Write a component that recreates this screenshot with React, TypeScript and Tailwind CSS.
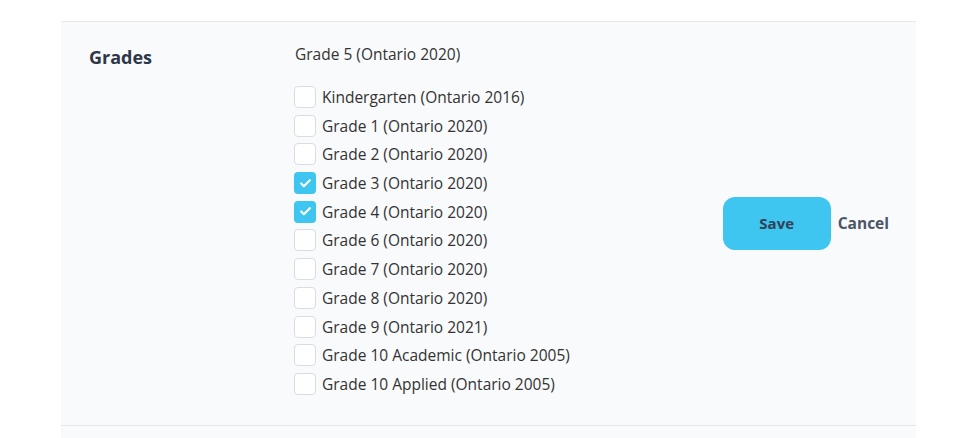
import { Check } from "lucide-react";
import { useState } from "react";

const grades = [
  "Kindergarten (Ontario 2016)",
  "Grade 1 (Ontario 2020)",
  "Grade 2 (Ontario 2020)",
  "Grade 3 (Ontario 2020)",
  "Grade 4 (Ontario 2020)",
  "Grade 6 (Ontario 2020)",
  "Grade 7 (Ontario 2020)",
  "Grade 8 (Ontario 2020)",
  "Grade 9 (Ontario 2021)",
  "Grade 10 Academic (Ontario 2005)",
  "Grade 10 Applied (Ontario 2005)",
];

const App = () => {
  const [checked, setChecked] = useState<string[]>([
    "Grade 3 (Ontario 2020)",
    "Grade 4 (Ontario 2020)",
  ]);

  const toggle = (g: string) =>
    setChecked((c) => (c.includes(g) ? c.filter((x) => x !== g) : [...c, g]));

  return (
    <div className="w-[975px] h-[438px] bg-white pt-[21px] pl-[61px] font-['Open_Sans',sans-serif] overflow-hidden">
      <div className="w-[855px] h-[417px] bg-[#f9fafb] border-t border-[#e5e8eb]">
        <div className="flex h-[404px] border-b border-[#e5e8eb]">
          <h2 className="w-[233px] pl-[28px] pt-[23px] text-[18px] leading-[24px] font-bold text-[#2d3748]">
            Grades
          </h2>
          <div className="flex-1 pt-[22px]">
            <p className="pl-px text-[15.5px] leading-[20px] text-[#333]">
              Grade 5 (Ontario 2020)
            </p>
            <ul className="mt-[22px] flex flex-col gap-[6.7px]">
              {grades.map((g) => {
                const on = checked.includes(g);
                return (
                  <li
                    key={g}
                    className="flex h-[22px] items-center gap-[6px] cursor-pointer"
                    onClick={() => toggle(g)}
                  >
                    <span
                      className={
                        on
                          ? "w-[22px] h-[22px] rounded-[4px] bg-[#3ec5f0] flex items-center justify-center"
                          : "w-[22px] h-[22px] rounded-[4px] border border-[#d5dee6] bg-white"
                      }
                    >
                      {on && <Check size={13} strokeWidth={4} className="text-white" />}
                    </span>
                    <span className="text-[15.5px] leading-[20px] text-[#333]">{g}</span>
                  </li>
                );
              })}
            </ul>
          </div>
          <div className="flex items-center gap-[7px] pr-[27px]">
            <button className="w-[108px] h-[53px] rounded-[12px] bg-[#3ec5f0] text-[15px] font-bold text-[#334155]">
              Save
            </button>
            <button className="text-[15.5px] font-bold text-[#4a5568]">Cancel</button>
          </div>
        </div>
      </div>
    </div>
  );
};

export default App;
